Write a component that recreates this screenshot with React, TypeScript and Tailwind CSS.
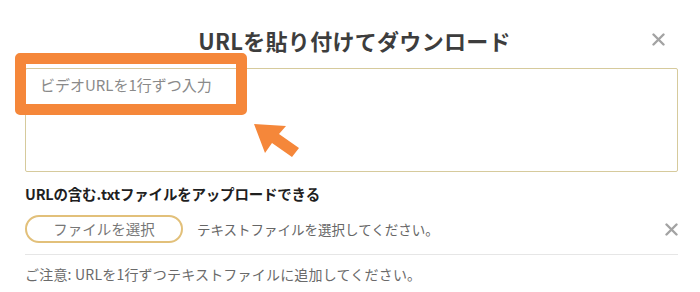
import React from "react";

function XIcon({ className }: { className?: string }) {
  return (
    <svg className={className} width="13" height="13" viewBox="0 0 13 13">
      <path d="M1.5 1.5 L11.5 11.5 M11.5 1.5 L1.5 11.5" stroke="#a3a3a3" strokeWidth="2.4" strokeLinecap="round" />
    </svg>
  );
}

export default function App() {
  const font = { fontFamily: '"Noto Sans CJK JP", "Noto Sans", sans-serif' };
  return (
    <div className="relative w-[700px] h-[292px] bg-white overflow-hidden" style={font}>
      <div className="flex flex-col pl-[25px] pr-[22px]">
        <div className="relative h-[68px] flex items-center justify-center pt-[12px]">
          <h1 className="text-[22px] font-bold text-[#3d3d3d] leading-none tracking-[0.3px] ml-[6px]">
            URLを貼り付けてダウンロード
          </h1>
          <XIcon className="absolute right-[13px] top-[33px]" />
        </div>
        <textarea
          className="h-[104px] w-full resize-none border border-[#d6ca9c] rounded-[2px] px-[14px] pt-[5px] text-[15px] leading-[22px] text-[#555] placeholder:text-[#8a8a8a] outline-none"
          placeholder="ビデオURLを1行ずつ入力"
          style={font}
        />
        <div className="mt-[11px] text-[14.5px] font-bold text-[#1f1f1f] leading-[22px] tracking-[-0.2px]">
          URLの含む.txtファイルをアップロードできる
        </div>
        <div className="mt-[10px] flex items-center h-[28px]">
          <button
            className="h-[28px] w-[158px] rounded-full border-2 border-[#e2c07a] text-[14.5px] text-[#777] flex items-center justify-center"
            style={font}
          >
            ファイルを選択
          </button>
          <span className="ml-[14px] text-[13.5px] text-[#666]">テキストファイルを選択してください。</span>
          <XIcon className="ml-auto mr-[0px]" />
        </div>
        <div className="mt-[11px] border-t border-[#e6e6e6]" />
        <div className="mt-[9px] text-[14px] text-[#6a6a6a] leading-[20px] tracking-[0.2px]">
          ご注意: URLを1行ずつテキストファイルに追加してください。
        </div>
      </div>

      <div className="absolute left-[15px] top-[53px] w-[232px] h-[62px] border-[11px] border-[#f5873a] rounded-[5px]" />
      <svg className="absolute left-[249px] top-[117px]" width="58" height="46" viewBox="0 0 58 46">
        <polygon points="5,7 37,9 30,17 50,31 43,40 23,26 16,36" fill="#f5873a" />
      </svg>
    </div>
  );
}
